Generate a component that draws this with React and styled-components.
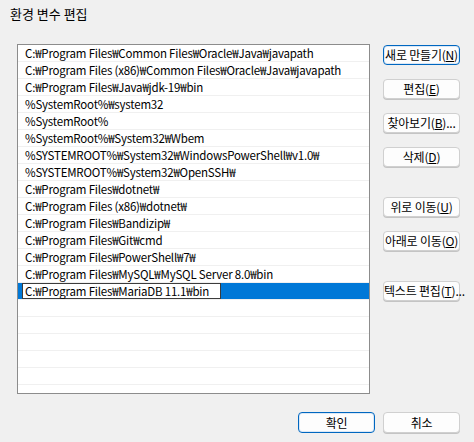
import React from "react";
import styled, { createGlobalStyle } from "styled-components";

const Global = createGlobalStyle`
  html, body { margin: 0; padding: 0; background: #f0f0f0; }
  * { box-sizing: border-box; }
`;

const Window = styled.div`
  width: 474px;
  height: 442px;
  background: #f0f0f0;
  font-family: "Noto Sans CJK KR", "Noto Sans", sans-serif;
  font-size: 12px;
  color: #000;
  display: flex;
  flex-direction: column;
  overflow: hidden;
`;

const TitleBar = styled.div`
  height: 44px;
  padding: 5px 0 0 10px;
  font-size: 13px;
  line-height: 18px;
`;

const Body = styled.div`
  display: flex;
  padding-left: 17px;
  gap: 13px;
`;

const ListBox = styled.div`
  width: 353px;
  height: 350px;
  border: 1px solid #8c8c8c;
  background: #fff;
  overflow: hidden;
  font-size: 11.5px;
  letter-spacing: -0.2px;
`;

const Row = styled.div`
  height: 17px;
  border-bottom: 1px solid #f0f0f0;
  display: flex;
  align-items: center;
  padding-left: ${(p) => (p.$editing ? "4px" : "7px")};
  background: ${(p) => (p.$editing ? "#0078d7" : "#fff")};
  white-space: nowrap;
  line-height: 16px;
`;

const EditBox = styled.span`
  display: inline-block;
  height: 16px;
  line-height: 14px;
  background: #fff;
  border: 1px solid #3c3c3c;
  padding: 0 11px 0 2px;
`;

const Side = styled.div`
  display: flex;
  flex-direction: column;
  width: 77px;
  padding-top: 1px;
`;

const Button = styled.button`
  font-family: inherit;
  font-size: 12px;
  color: #000;
  height: 20px;
  width: 77px;
  padding: 0;
  line-height: 18px;
  white-space: nowrap;
  background: #fdfdfd;
  border: 1px solid ${(p) => (p.$primary ? "#0067c0" : "#d0d0d0")};
  box-shadow: ${(p) => (p.$primary ? "inset 0 0 0 1px #dbe8f6" : "0 1px 0 #c4c4c4")};
  border-radius: 4px;
  margin-top: ${(p) => p.$gap ?? 14}px;
  letter-spacing: -0.2px;
  &:first-child { margin-top: 0; }
`;

const Footer = styled.div`
  display: flex;
  justify-content: flex-end;
  gap: 8px;
  padding: 18px 14px 0 0;
`;

const FooterButton = styled(Button)`
  height: 21px;
  margin-top: 0;
`;

const rows = [
  "C:₩Program Files₩Common Files₩Oracle₩Java₩javapath",
  "C:₩Program Files (x86)₩Common Files₩Oracle₩Java₩javapath",
  "C:₩Program Files₩Java₩jdk-19₩bin",
  "%SystemRoot%₩system32",
  "%SystemRoot%",
  "%SystemRoot%₩System32₩Wbem",
  "%SYSTEMROOT%₩System32₩WindowsPowerShell₩v1.0₩",
  "%SYSTEMROOT%₩System32₩OpenSSH₩",
  "C:₩Program Files₩dotnet₩",
  "C:₩Program Files (x86)₩dotnet₩",
  "C:₩Program Files₩Bandizip₩",
  "C:₩Program Files₩Git₩cmd",
  "C:₩Program Files₩PowerShell₩7₩",
  "C:₩Program Files₩MySQL₩MySQL Server 8.0₩bin",
];

const sideButtons = [
  { label: "새로 만들기", key: "N", primary: true, gap: 0 },
  { label: "편집", key: "E" },
  { label: "찾아보기", key: "B", dots: true },
  { label: "삭제", key: "D" },
  { label: "위로 이동", key: "U", gap: 30 },
  { label: "아래로 이동", key: "O" },
  { label: "텍스트 편집", key: "T", dots: true, gap: 30 },
];

export default function App() {
  const empty = Array.from({ length: 6 });
  return (
    <>
      <Global />
      <Window>
        <TitleBar>환경 변수 편집</TitleBar>
        <Body>
          <ListBox>
            {rows.map((r) => (
              <Row key={r}>{r}</Row>
            ))}
            <Row $editing>
              <EditBox>C:₩Program Files₩MariaDB 11.1₩bin</EditBox>
            </Row>
            {empty.map((_, i) => (
              <Row key={"e" + i} />
            ))}
          </ListBox>
          <Side>
            {sideButtons.map((b) => (
              <Button key={b.key} $primary={b.primary} $gap={b.gap}>
                {b.label}(<u>{b.key}</u>){b.dots ? "..." : ""}
              </Button>
            ))}
          </Side>
        </Body>
        <Footer>
          <FooterButton $primary>확인</FooterButton>
          <FooterButton>취소</FooterButton>
        </Footer>
      </Window>
    </>
  );
}
